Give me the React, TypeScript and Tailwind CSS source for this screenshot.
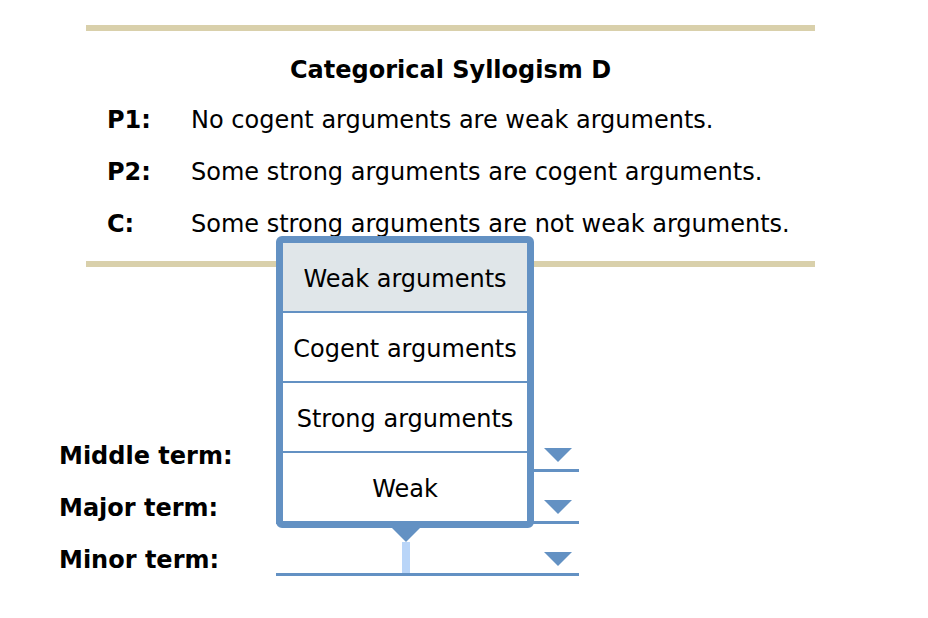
import React from "react";

const font = { fontFamily: '"DejaVu Sans", Verdana, sans-serif' };

function Tri({ className = "" }: { className?: string }) {
  return (
    <svg width="28" height="14" viewBox="0 0 28 14" className={className}>
      <polygon points="0,0 28,0 14,14" fill="#6391c3" />
    </svg>
  );
}

function TermRow({ label }: { label: string }) {
  return (
    <div className="flex h-[52px] items-end">
      <div className="w-[276px] shrink-0 pl-[59px]">
        <div className="mb-[2px] text-[24px] leading-[28px] font-bold text-black whitespace-nowrap">{label}</div>
      </div>
      <div className="flex h-full w-[303px] shrink-0 items-end justify-end border-b-[3px] border-[#6391c3] pr-[7px]">
        <Tri className="mb-[7px]" />
      </div>
    </div>
  );
}

export default function App() {
  const options = ["Weak arguments", "Cogent arguments", "Strong arguments", "Weak"];
  return (
    <div className="relative h-[618px] w-[928px] bg-white text-black" style={font}>
      <div className="ml-[86px] w-[729px] pt-[25px]">
        <div className="h-[6px] bg-[#d9d0ab]" />
        <div className="mt-[25px] text-center text-[24px] leading-[28px] font-bold">Categorical Syllogism D</div>
        <div className="mt-[10px]">
          {[
            ["P1:", "No cogent arguments are weak arguments."],
            ["P2:", "Some strong arguments are cogent arguments."],
            ["C:", "Some strong arguments are not weak arguments."],
          ].map(([k, v]) => (
            <div key={k} className="flex h-[52px] items-center text-[24px] leading-[28px]">
              <div className="w-[105px] shrink-0 pl-[21px] font-bold">{k}</div>
              <div className="whitespace-nowrap">{v}</div>
            </div>
          ))}
        </div>
        <div className="mt-[11px] h-[6px] bg-[#d9d0ab]" />
      </div>

      <div className="mt-[153px]">
        <TermRow label="Middle term:" />
        <TermRow label="Major term:" />
        <TermRow label="Minor term:" />
      </div>

      {/* dropdown popup */}
      <div className="absolute left-[276px] top-[236px] w-[258px] rounded-[6px] border-[7px] border-[#6391c3] bg-white overflow-hidden">
        {options.map((o, i) => (
          <div
            key={o}
            className={
              "flex items-center justify-center pt-[4px] text-[24px] leading-[28px] whitespace-nowrap " +
              (i === 0 ? "bg-[#e0e6e9] " : "bg-white ") +
              (i < 3 ? "h-[70px] border-b-2 border-[#6391c3]" : "h-[68px]")
            }
          >
            {o}
          </div>
        ))}
      </div>
      <div className="absolute left-[392px] top-[528px] flex w-[28px] flex-col items-center">
        <Tri />
        <div className="h-[31px] w-[8px] bg-[#b9d5f8]" />
      </div>
    </div>
  );
}
